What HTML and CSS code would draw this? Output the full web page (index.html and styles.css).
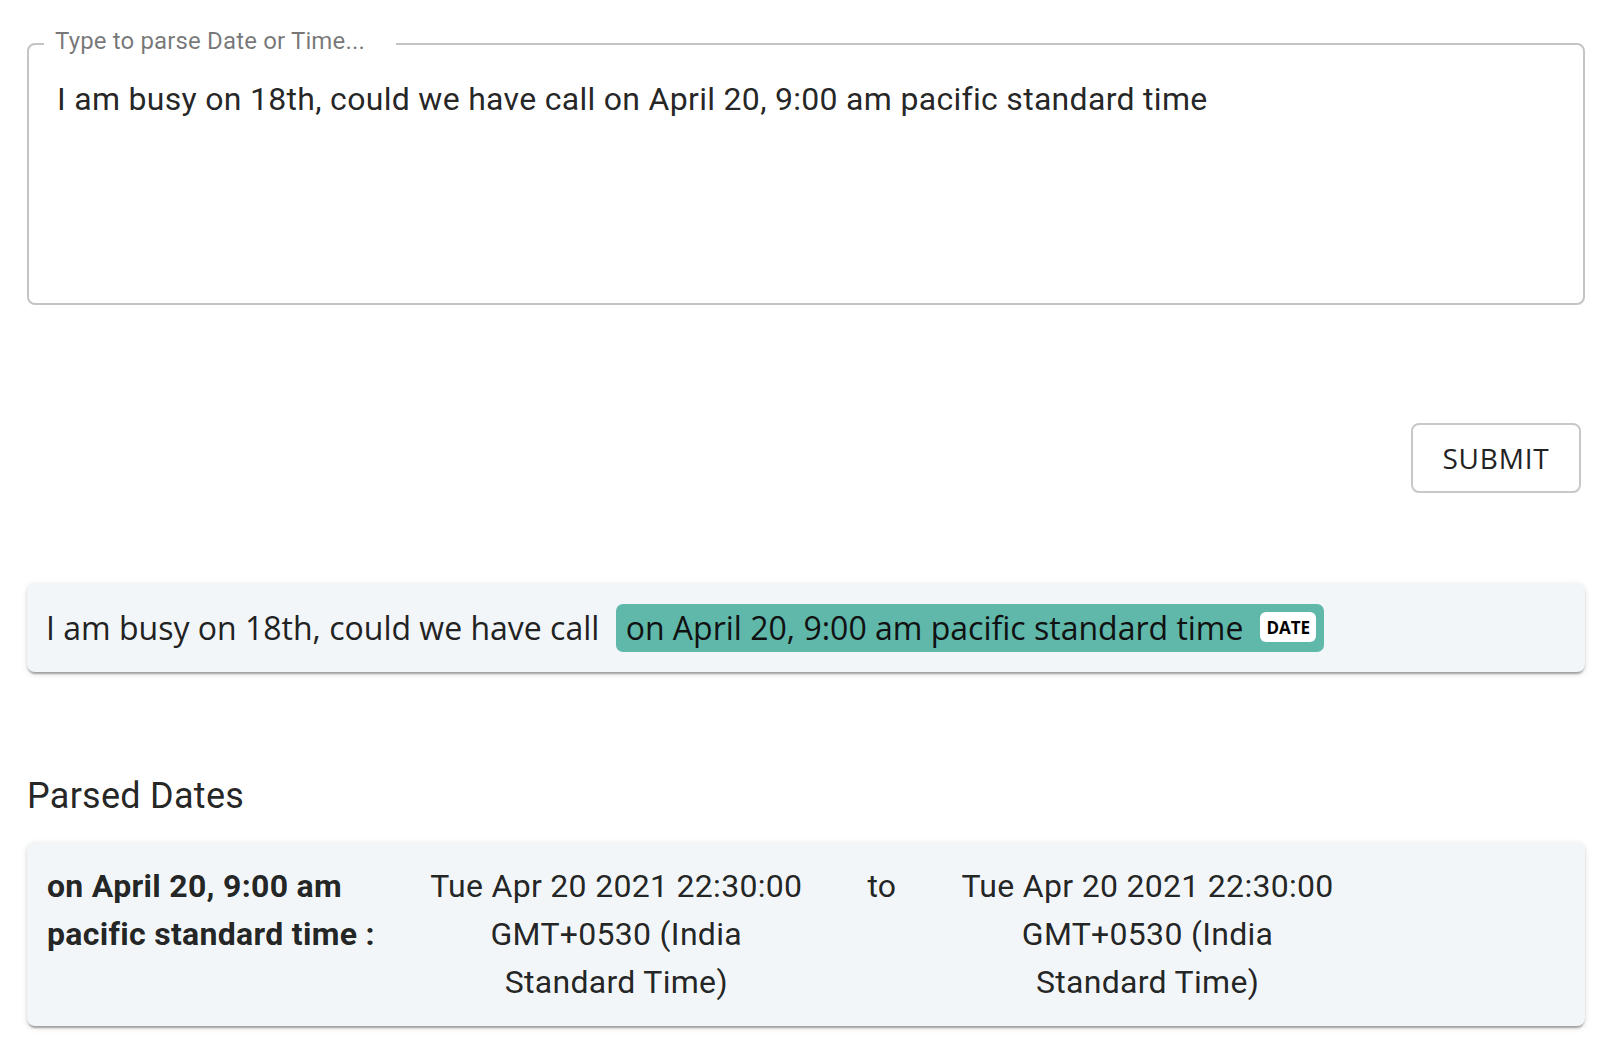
FILE: index.html
```html
<!DOCTYPE html>
<html lang="en">
<head>
<meta charset="utf-8">
<title>Date Parser</title>
<link rel="stylesheet" href="styles.css">
</head>
<body>
<main class="page">
  <div class="field">
    <span class="field-label">Type to parse Date or Time...</span>
    <div class="field-input">I am busy on 18th, could we have call on April 20, 9:00 am pacific standard time</div>
  </div>

  <div class="actions">
    <button class="btn-submit" type="button">Submit</button>
  </div>

  <section class="paper highlight">
    <span class="plain">I am busy on 18th, could we have call </span><mark class="entity">on April 20, 9:00 am pacific standard time<span class="entity-label">Date</span></mark>
  </section>

  <h2 class="section-title">Parsed Dates</h2>

  <section class="paper parsed">
    <div class="parsed-row">
      <div class="parsed-key">on April 20, 9:00 am pacific standard time :</div>
      <div class="parsed-val">Tue Apr 20 2021 22:30:00 GMT+0530 (India Standard Time)</div>
      <div class="parsed-val">to</div>
      <div class="parsed-val">Tue Apr 20 2021 22:30:00 GMT+0530 (India Standard Time)</div>
    </div>
  </section>
</main>
</body>
</html>
```

FILE: styles.css
```css
* {
  box-sizing: border-box;
}

html, body {
  margin: 0;
  padding: 0;
  background: #ffffff;
}

body {
  font-family: Roboto, "Liberation Sans", Arial, sans-serif;
  color: rgba(0, 0, 0, 0.87);
  letter-spacing: 0.15px;
}

.page {
  padding: 0 29px 34px 27px;
}

/* Outlined text field */
.field {
  position: relative;
  margin-top: 43px;
  height: 262px;
  border: 2px solid #c4c4c4;
  border-radius: 8px;
  padding: 35px 28px;
}

.field-label {
  position: absolute;
  top: -16px;
  left: 15px;
  padding: 0 31px 0 11px;
  background: #ffffff;
  font-size: 24px;
  line-height: 24px;
  color: rgba(0, 0, 0, 0.54);
  white-space: nowrap;
}

.field-input {
  font-size: 32px;
  line-height: 38px;
  letter-spacing: 0.3px;
  color: rgba(0, 0, 0, 0.87);
}

/* Submit */
.actions {
  display: flex;
  justify-content: flex-end;
  margin-top: 118px;
  padding-right: 4px;
}

.btn-submit {
  width: 170px;
  height: 70px;
  background: #ffffff;
  border: 2px solid #c8c8c8;
  border-radius: 8px;
  font-family: "Open Sans", "Noto Sans", sans-serif;
  font-size: 28px;
  letter-spacing: 0.8px;
  text-transform: uppercase;
  color: #222222;
  padding: 0;
  cursor: pointer;
}

/* Paper cards */
.paper {
  background: #f2f6f9;
  border-radius: 8px;
  box-shadow: 0 4px 2px -2px rgba(0, 0, 0, 0.2),
              0 2px 2px 0 rgba(0, 0, 0, 0.14),
              0 2px 6px 0 rgba(0, 0, 0, 0.12);
}

.highlight {
  margin-top: 90px;
  padding: 20px 19px;
  font-family: "Open Sans", "Noto Sans", sans-serif;
  font-size: 32px;
  line-height: 49px;
  letter-spacing: 0;
  color: #222222;
  white-space: nowrap;
}

.entity {
  display: inline-block;
  background: #5fb8aa;
  color: #111111;
  line-height: 48px;
  padding: 0 8px 0 10px;
  margin: 0 8px 0 8px;
  border-radius: 7px;
}

.entity-label {
  display: inline-block;
  vertical-align: 6px;
  margin-left: 17px;
  padding: 7px 6px 6px;
  background: #ffffff;
  color: #000000;
  border-radius: 6px;
  font-size: 17px;
  font-weight: 700;
  line-height: 17px;
  text-transform: uppercase;
}

/* Parsed dates */
.section-title {
  margin: 103px 0 25px;
  font-size: 36px;
  font-weight: 400;
  line-height: normal;
  letter-spacing: 0.27px;
  color: rgba(0, 0, 0, 0.87);
}

.parsed {
  padding: 20px 20px;
  font-size: 32px;
  line-height: 48px;
  letter-spacing: 0.3px;
}

.parsed-row {
  display: grid;
  grid-template-columns: 25% 25% 10% 25%;
}

.parsed-key {
  font-weight: 700;
}

.parsed-val {
  text-align: center;
}
```
